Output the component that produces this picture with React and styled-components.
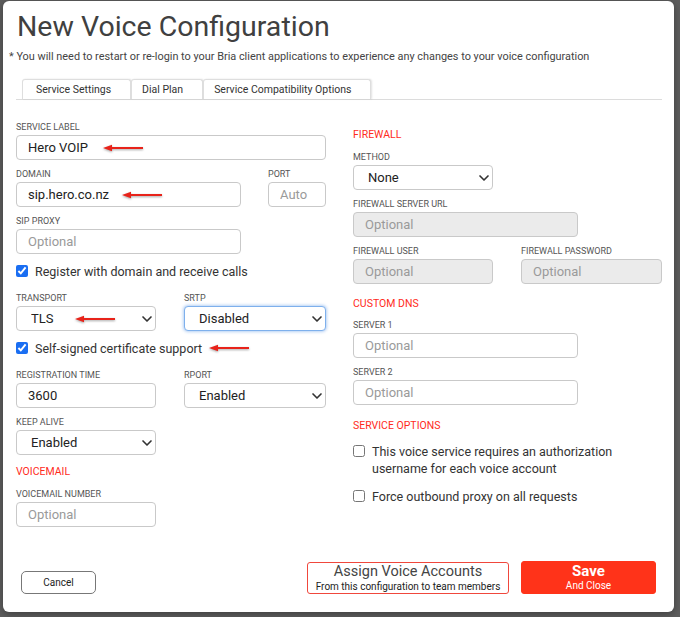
import React from 'react';
import styled, { createGlobalStyle } from 'styled-components';
import { ChevronDown } from 'lucide-react';

const GlobalStyle = createGlobalStyle`
  html, body {
    margin: 0;
    padding: 0;
    background: #5e5e5e;
  }
  body {
    font-family: Roboto, "Noto Sans", Arial, sans-serif;
  }
  * {
    box-sizing: border-box;
  }
`;

const Backdrop = styled.div`
  width: 680px;
  height: 617px;
  padding: 1px 6px 5px 3px;
  background: #5e5e5e;
`;

const Modal = styled.div`
  width: 671px;
  height: 611px;
  background: #fff;
  border-radius: 6px;
  box-shadow: 0 2px 8px rgba(0, 0, 0, 0.35);
  display: flex;
  flex-direction: column;
`;

const Header = styled.header`
  padding: 9px 0 0 6px;
`;

const Title = styled.h1`
  margin: 0 0 0 8px;
  font-size: 28.5px;
  line-height: 34px;
  font-weight: 400;
  color: #404040;
`;

const Note = styled.p`
  margin: 6px 0 0;
  font-size: 10.9px;
  line-height: 14px;
  color: #444;
`;

const TabBar = styled.nav`
  display: flex;
  margin: 15px 12px 0 13px;
  padding-left: 6px;
  border-bottom: 1px solid #dcdcdc;
`;

const Tab = styled.div`
  height: 20px;
  display: flex;
  align-items: center;
  padding: 0 19px 0 ${p => (p.$first ? 13 : 10)}px;
  font-size: 10.5px;
  color: #333;
  background: #fff;
  border: 1px solid #dedede;
  border-bottom: none;
  border-radius: 3px 3px 0 0;
  box-shadow: 1px 0 2px rgba(0, 0, 0, 0.12);
`;

const Body = styled.div`
  display: grid;
  grid-template-columns: 310px 309px;
  column-gap: 27px;
  padding: 21px 12px 0 13px;
`;

const Column = styled.div`
  display: flex;
  flex-direction: column;
  padding-top: ${p => p.$offset || 0}px;
`;

const Row = styled.div`
  display: grid;
  grid-template-columns: ${p => p.$cols};
  column-gap: ${p => p.$gap || 27}px;
`;

const Field = styled.div`
  margin-bottom: 8px;
  width: ${p => (p.$w ? `${p.$w}px` : 'auto')};
`;

const Label = styled.label`
  display: block;
  font-size: 9px;
  line-height: 12px;
  margin-bottom: 2px;
  color: #555;
  text-transform: uppercase;
`;

const Control = styled.div`
  position: relative;
`;

const Input = styled.input`
  width: 100%;
  height: 25px;
  padding: 0 11px;
  border: 1px solid #c9c9c9;
  border-radius: 4px;
  font-family: inherit;
  font-size: 13px;
  color: #222;
  background: ${p => (p.disabled ? '#ebebeb' : '#fff')};
  outline: none;

  &::placeholder {
    color: #9a9a9a;
  }
`;

const Select = styled.select`
  appearance: none;
  width: 100%;
  height: 25px;
  padding: 0 22px 0 14px;
  border: 1px solid ${p => (p.$focused ? '#7eb0ec' : '#c9c9c9')};
  border-radius: 4px;
  box-shadow: ${p => (p.$focused ? '0 0 3px 1px rgba(90, 150, 230, 0.45)' : 'none')};
  font-family: inherit;
  font-size: 13px;
  color: #222;
  background: #fff;
  outline: none;
`;

const Chevron = styled(ChevronDown)`
  position: absolute;
  right: 1px;
  top: 50%;
  transform: translateY(-50%);
  color: #333;
  pointer-events: none;
`;

const CheckRow = styled.label`
  position: relative;
  display: flex;
  align-items: ${p => (p.$top ? 'flex-start' : 'center')};
  gap: 7px;
  min-height: 18px;
  margin-bottom: ${p => p.$mb ?? 12}px;
  font-size: 12.5px;
  line-height: 17px;
  color: #333;

  input {
    width: 12px;
    height: 12px;
    margin: ${p => (p.$top ? '2px' : '0')} 0 0;
    flex: none;
    accent-color: #1a6ef2;
  }
`;

const Heading = styled.h3`
  margin: ${p => p.$mt ?? 3}px 0 ${p => p.$mb ?? 9}px;
  font-size: 10.5px;
  line-height: 14px;
  font-weight: 400;
  color: #ff2b1c;
  text-transform: uppercase;
`;

const Options = styled.div`
  display: flex;
  flex-direction: column;
  gap: 10px;
  padding-top: 1px;
`;

const Footer = styled.footer`
  margin-top: auto;
  display: flex;
  align-items: flex-end;
  gap: 12px;
  padding: 0 18px 18px;
`;

const CancelButton = styled.button`
  width: 75px;
  height: 23px;
  margin-right: auto;
  border: 1px solid #777;
  border-radius: 5px;
  background: #fff;
  font-family: inherit;
  font-size: 10px;
  color: #222;
`;

const ActionButton = styled.button`
  width: ${p => p.$w}px;
  height: ${p => p.$h}px;
  display: flex;
  flex-direction: column;
  align-items: center;
  justify-content: center;
  border: 1px solid ${p => (p.$primary ? '#ff3319' : '#f0473c')};
  border-radius: 3px;
  background: ${p => (p.$primary ? '#ff3319' : '#fff')};
  color: ${p => (p.$primary ? '#fff' : '#444')};
  font-family: inherit;
  padding: 0;
`;

const ButtonTitle = styled.span`
  font-size: ${p => (p.$bold ? 15 : 14.5)}px;
  line-height: 16px;
  font-weight: ${p => (p.$bold ? 700 : 400)};
`;

const ButtonSub = styled.span`
  font-size: 10px;
  line-height: 13px;
  color: ${p => (p.$light ? '#fff' : '#222')};
`;

const ArrowMark = styled.svg`
  position: absolute;
  top: 50%;
  left: ${p => p.$x}px;
  transform: translateY(-50%);
  filter: drop-shadow(0 1px 1px rgba(0, 0, 0, 0.35));
  pointer-events: none;
`;

// red pointer used to call out the filled-in settings
const Arrow = ({ x }) => (
  <ArrowMark $x={x} width="40" height="8" viewBox="0 0 40 8">
    <path d="M0 4 L9 0.8 L9 7.2 Z" fill="#e8231a" />
    <rect x="8" y="3" width="32" height="2" fill="#e8231a" />
  </ArrowMark>
);

const TextField = ({ label, value, placeholder, disabled, w, arrow }) => (
  <Field $w={w}>
    <Label>{label}</Label>
    <Control>
      <Input defaultValue={value} placeholder={placeholder} disabled={disabled} />
      {arrow != null && <Arrow x={arrow} />}
    </Control>
  </Field>
);

const SelectField = ({ label, value, options, w, focused, arrow }) => (
  <Field $w={w}>
    <Label>{label}</Label>
    <Control>
      <Select defaultValue={value} $focused={focused}>
        {options.map(o => (
          <option key={o}>{o}</option>
        ))}
      </Select>
      <Chevron size={16} strokeWidth={2.5} />
      {arrow != null && <Arrow x={arrow} />}
    </Control>
  </Field>
);

export default function App() {
  return (
    <>
      <GlobalStyle />
      <Backdrop>
        <Modal>
          <Header>
            <Title>New Voice Configuration</Title>
            <Note>
              * You will need to restart or re-login to your Bria client applications to experience any changes to your voice configuration
            </Note>
          </Header>

          <TabBar>
            <Tab $first>Service Settings</Tab>
            <Tab>Dial Plan</Tab>
            <Tab>Service Compatibility Options</Tab>
          </TabBar>

          <Body>
            <Column>
              <TextField label="Service Label" value="Hero VOIP" arrow={87} />
              <Row $cols="225px 58px">
                <TextField label="Domain" value="sip.hero.co.nz" arrow={106} />
                <TextField label="Port" placeholder="Auto" />
              </Row>
              <TextField label="SIP Proxy" placeholder="Optional" w={225} />
              <CheckRow>
                <input type="checkbox" defaultChecked />
                Register with domain and receive calls
              </CheckRow>
              <Row $cols="140px 142px" $gap={28}>
                <SelectField label="Transport" value="TLS" options={['UDP', 'TCP', 'TLS']} arrow={59} />
                <SelectField label="SRTP" value="Disabled" options={['Disabled', 'Enabled']} focused />
              </Row>
              <CheckRow>
                <input type="checkbox" defaultChecked />
                Self-signed certificate support
                <Arrow x={193} />
              </CheckRow>
              <Row $cols="140px 142px" $gap={28}>
                <TextField label="Registration Time" value="3600" />
                <SelectField label="Rport" value="Enabled" options={['Enabled', 'Disabled']} />
              </Row>
              <SelectField label="Keep Alive" value="Enabled" options={['Enabled', 'Disabled']} w={140} />
              <Heading $mt={2}>Voicemail</Heading>
              <TextField label="Voicemail Number" placeholder="Optional" w={140} />
            </Column>

            <Column $offset={4}>
              <Heading>Firewall</Heading>
              <SelectField label="Method" value="None" options={['None', 'STUN', 'TURN', 'ICE']} w={140} />
              <TextField label="Firewall Server URL" placeholder="Optional" disabled w={225} />
              <Row $cols="140px 141px" $gap={28}>
                <TextField label="Firewall User" placeholder="Optional" disabled />
                <TextField label="Firewall Password" placeholder="Optional" disabled />
              </Row>
              <Heading $mt={5} $mb={8}>Custom DNS</Heading>
              <TextField label="Server 1" placeholder="Optional" w={225} />
              <TextField label="Server 2" placeholder="Optional" w={225} />
              <Heading $mt={6}>Service Options</Heading>
              <Options>
                <CheckRow $top $mb={0}>
                  <input type="checkbox" />
                  <span>
                    This voice service requires an authorization
                    <br />
                    username for each voice account
                  </span>
                </CheckRow>
                <CheckRow $mb={0}>
                  <input type="checkbox" />
                  Force outbound proxy on all requests
                </CheckRow>
              </Options>
            </Column>
          </Body>

          <Footer>
            <CancelButton>Cancel</CancelButton>
            <ActionButton $w={202} $h={32}>
              <ButtonTitle>Assign Voice Accounts</ButtonTitle>
              <ButtonSub>From this configuration to team members</ButtonSub>
            </ActionButton>
            <ActionButton $w={135} $h={33} $primary>
              <ButtonTitle $bold>Save</ButtonTitle>
              <ButtonSub $light>And Close</ButtonSub>
            </ActionButton>
          </Footer>
        </Modal>
      </Backdrop>
    </>
  );
}
